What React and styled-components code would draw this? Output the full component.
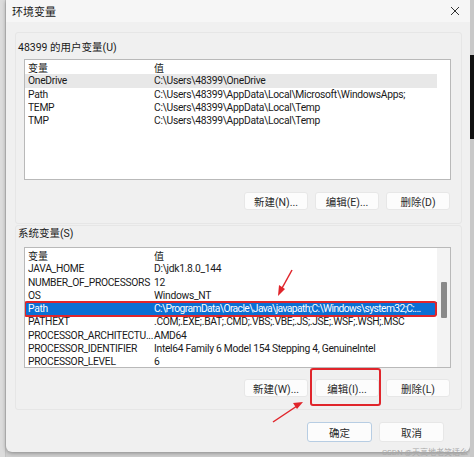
import React from 'react'
import styled, { createGlobalStyle } from 'styled-components'

const Global = createGlobalStyle`
  html, body { margin: 0; padding: 0; }
  body {
    width: 474px;
    height: 457px;
    overflow: hidden;
    background: #d4d4d4;
    font-family: Roboto, "Noto Sans CJK SC", sans-serif;
  }
`

const Screen = styled.div`
  width: 474px;
  height: 457px;
  display: flex;
  background: #cfcfcf;
  position: relative;
  overflow: hidden;
`

const LeftStrip = styled.div`
  width: 5px;
  background: #dcdcdc;
  border-right: 1px solid #c4c4c4;
`

const RightStrip = styled.div`
  flex: 1;
  display: flex;
  flex-direction: column;
  background: #c8c8c8;
  padding-top: 55px;
`

const DarkBlock = styled.div`
  height: 84px;
  background: #111;
`

const Dialog = styled.div`
  width: 464px;
  height: 452px;
  background: #f0f0f0;
  border-radius: 0 0 6px 6px;
  box-shadow: 0 1px 4px rgba(0, 0, 0, 0.35);
  display: flex;
  flex-direction: column;
  font-size: 10.5px;
  color: #1a1a1a;
`

const TitleBar = styled.div`
  height: 22px;
  display: flex;
  align-items: center;
  justify-content: space-between;
  padding: 0 10px 0 6px;
  background: #f6f6f6;
  font-size: 11px;
  font-family: "Noto Sans CJK SC", sans-serif;
`

const Body = styled.div`
  flex: 1;
  display: flex;
  flex-direction: column;
  padding: 10px 8px 0 9px;
`

const Group = styled.div`
  height: ${p => p.h}px;
  margin-top: ${p => p.mt || 0}px;
  border: 1px solid #e6e6e6;
  border-radius: 3px;
  padding: ${p => p.pt}px 10px 0 8px;
  display: flex;
  flex-direction: column;
  box-sizing: border-box;
`

const GroupLabel = styled.div`
  height: 14px;
  line-height: 14px;
  margin-left: -6px;
  font-size: 10.5px;
`

const List = styled.div`
  height: 121px;
  margin-top: ${p => p.mt}px;
  background: #fff;
  border: 1px solid #b9b9b9;
  box-sizing: border-box;
  display: flex;
  overflow: hidden;
`

const Rows = styled.div`
  flex: 1;
  padding-top: 1px;
`

const Row = styled.div`
  display: grid;
  grid-template-columns: 126px 1fr;
  height: 13.3px;
  line-height: 13.3px;
  padding-left: 3px;
  white-space: nowrap;
  font-size: 10.3px;
  letter-spacing: -0.3px;
  background: ${p => (p.sel ? '#0a6fd4' : p.hover ? '#e8e8e8' : 'transparent')};
  color: ${p => (p.sel ? '#fff' : '#1a1a1a')};
  position: relative;
`

const Cell = styled.span`
  overflow: hidden;
  white-space: nowrap;
  letter-spacing: ${p => (p.tight ? '-0.6px' : 'inherit')};
`

const HeadCell = styled(Cell)`
  font-family: "Noto Sans CJK SC", sans-serif;
  font-size: 10px;
  letter-spacing: 0;
`

const RedRing = styled.div`
  position: absolute;
  inset: -1px 0 -2px -1px;
  border: 2px solid #e0252b;
  border-radius: 3px;
  pointer-events: none;
`

const ScrollTrack = styled.div`
  width: 13px;
  background: ${p => (p.show ? '#f3f3f3' : '#fff')};
  display: flex;
  justify-content: center;
  padding-top: 34px;
`

const Thumb = styled.div`
  width: 6px;
  height: 36px;
  background: #8a8a8a;
  border-radius: 1px;
`

const ButtonRow = styled.div`
  display: flex;
  justify-content: flex-end;
  gap: 7px;
  margin-top: ${p => p.mt}px;
  margin-right: 1px;
`

const Button = styled.div`
  width: ${p => p.w || 64}px;
  height: ${p => p.hh || 18}px;
  box-sizing: border-box;
  background: #fcfcfc;
  border: 1px solid ${p => (p.primary ? '#b7cde3' : '#e7e7e7')};
  border-radius: 3px;
  display: flex;
  align-items: center;
  justify-content: center;
  font-size: 10.5px;
  color: #2a2a2a;
  position: relative;
`

const ButtonRing = styled.div`
  position: absolute;
  inset: -12px -3px -10px -6px;
  border: 2px solid #e0252b;
  border-radius: 3px;
`

const Footer = styled.div`
  display: flex;
  justify-content: flex-end;
  gap: 7px;
  padding: 12px 18px 0 0;
`

const Watermark = styled.div`
  position: absolute;
  right: 6px;
  bottom: 0;
  font-size: 8px;
  color: #a8a8a8;
`

const Arrow = styled.svg`
  position: absolute;
  pointer-events: none;
`

const userVars = [
  ['OneDrive', 'C:\\Users\\48399\\OneDrive'],
  ['Path', 'C:\\Users\\48399\\AppData\\Local\\Microsoft\\WindowsApps;'],
  ['TEMP', 'C:\\Users\\48399\\AppData\\Local\\Temp'],
  ['TMP', 'C:\\Users\\48399\\AppData\\Local\\Temp'],
]

const sysVars = [
  ['JAVA_HOME', 'D:\\jdk1.8.0_144'],
  ['NUMBER_OF_PROCESSORS', '12'],
  ['OS', 'Windows_NT'],
  ['Path', 'C:\\ProgramData\\Oracle\\Java\\javapath;C:\\Windows\\system32;C:...'],
  ['PATHEXT', '.COM;.EXE;.BAT;.CMD;.VBS;.VBE;.JS;.JSE;.WSF;.WSH;.MSC'],
  ['PROCESSOR_ARCHITECTU...', 'AMD64'],
  ['PROCESSOR_IDENTIFIER', 'Intel64 Family 6 Model 154 Stepping 4, GenuineIntel'],
  ['PROCESSOR_LEVEL', '6'],
]

const Head = () => (
  <Row>
    <HeadCell>变量</HeadCell>
    <HeadCell>值</HeadCell>
  </Row>
)

const App = () => {
  return (
    <Screen>
      <Global />
      <LeftStrip />
      <Dialog>
        <TitleBar>
          <span>环境变量</span>
          <svg width="10" height="10" viewBox="0 0 10 10">
            <path d="M1 1 L9 9 M9 1 L1 9" stroke="#333" strokeWidth="1" />
          </svg>
        </TitleBar>
        <Body>
          <Group h={192} pt={8}>
            <GroupLabel>48399 的用户变量(U)</GroupLabel>
            <List mt={4}>
              <Rows>
                <Head />
                {userVars.map(([k, v], i) => (
                  <Row key={k} hover={i === 0}>
                    <Cell>{k}</Cell>
                    <Cell>{v}</Cell>
                  </Row>
                ))}
              </Rows>
              <ScrollTrack />
            </List>
            <ButtonRow mt={12}>
              <Button>新建(N)...</Button>
              <Button>编辑(E)...</Button>
              <Button>删除(D)</Button>
            </ButtonRow>
          </Group>
          <Group h={185} mt={1} pt={1}>
            <GroupLabel>系统变量(S)</GroupLabel>
            <List mt={6}>
              <Rows>
                <Head />
                {sysVars.map(([k, v]) => (
                  <Row key={k} sel={k === 'Path'}>
                    <Cell>{k}</Cell>
                    <Cell tight={k === 'Path'}>{v}</Cell>
                    {k === 'Path' && <RedRing />}
                  </Row>
                ))}
              </Rows>
              <ScrollTrack show>
                <Thumb />
              </ScrollTrack>
            </List>
            <ButtonRow mt={11}>
              <Button>新建(W)...</Button>
              <Button>
                编辑(I)...
                <ButtonRing />
              </Button>
              <Button>删除(L)</Button>
            </ButtonRow>
          </Group>
          <Footer>
            <Button primary hh={20} w={65}>确定</Button>
            <Button hh={20} w={65}>取消</Button>
          </Footer>
        </Body>
      </Dialog>
      <RightStrip>
        <DarkBlock />
      </RightStrip>
      <Arrow width="474" height="457" style={{ left: 0, top: 0 }}>
        <line x1="292" y1="270" x2="281" y2="290" stroke="#e0252b" strokeWidth="1.5" />
        <polygon points="278,296 279,285 285,289" fill="#e0252b" />
        <line x1="273" y1="422" x2="297" y2="406" stroke="#e0252b" strokeWidth="1.5" />
        <polygon points="303,402 293,403 297,409" fill="#e0252b" />
      </Arrow>
      <Watermark>CSDN @天高地老笑话么</Watermark>
    </Screen>
  )
}

export default App
